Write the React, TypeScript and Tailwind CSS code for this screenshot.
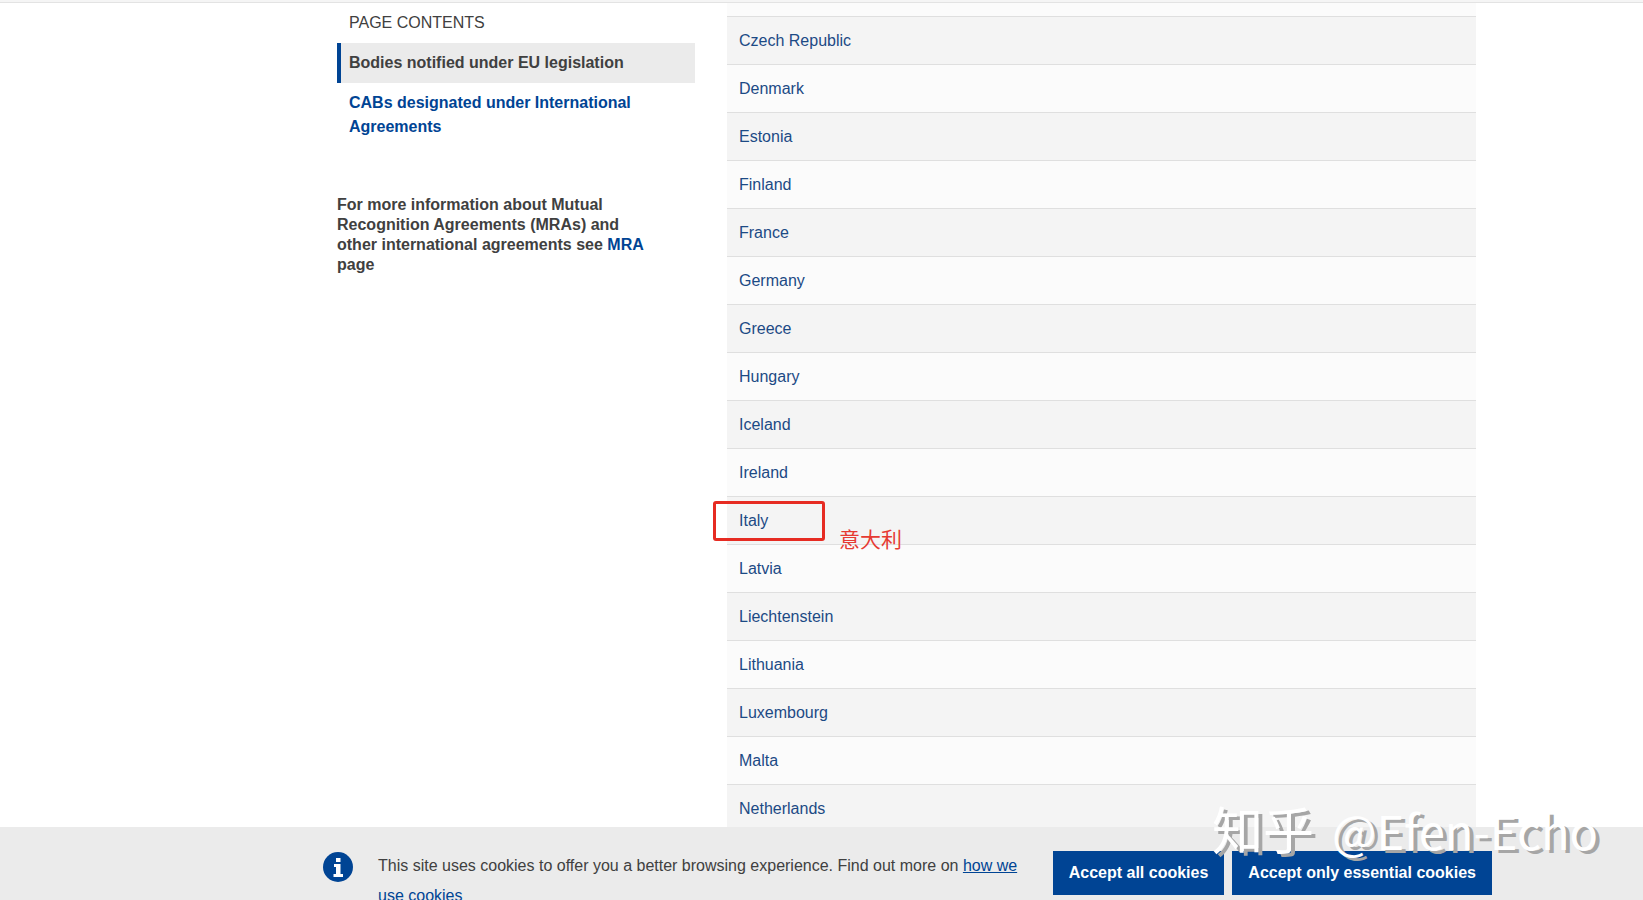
const countries = [
  "Czech Republic",
  "Denmark",
  "Estonia",
  "Finland",
  "France",
  "Germany",
  "Greece",
  "Hungary",
  "Iceland",
  "Ireland",
  "Italy",
  "Latvia",
  "Liechtenstein",
  "Lithuania",
  "Luxembourg",
  "Malta",
  "Netherlands",
];

function Sidebar() {
  return (
    <aside className="w-[358px] shrink-0 pt-2">
      <nav aria-labelledby="page-contents">
        <h2 id="page-contents" className="pb-2 pl-3 leading-6">
          PAGE CONTENTS
        </h2>
        <ul className="font-bold leading-6">
          <li>
            <a
              href="#bodies"
              aria-current="true"
              className="block border-l-4 border-[#004494] bg-[#ebebeb] py-2 pl-2"
            >
              Bodies notified under EU legislation
            </a>
          </li>
          <li>
            <a href="#cabs" className="block py-2 pl-3 pr-12 text-[#004494]">
              CABs designated under International Agreements
            </a>
          </li>
        </ul>
      </nav>
      <p className="mt-12 pr-12 font-bold leading-5">
        For more information about Mutual Recognition Agreements (MRAs) and
        other international agreements see{" "}
        <a href="#mra" className="text-[#004494]">
          MRA
        </a>{" "}
        page
      </p>
    </aside>
  );
}

function CountryTable() {
  return (
    <table className="w-full flex-1 border-separate border-spacing-0">
      <thead>
        <tr className="bg-[#fbfbfb]">
          <th className="h-[13px] p-0" />
        </tr>
      </thead>
      <tbody>
        {countries.map((name) => (
          <tr key={name} className="odd:bg-[#f4f4f4] even:bg-[#fbfbfb]">
            <td className="h-12 border-t border-[#dfdfdf] px-3 py-0">
              <span className="relative">
                <a href={`#${name}`} className="text-[#1c4a85]">
                  {name}
                </a>
                {name === "Italy" && <Highlight label="意大利" />}
              </span>
            </td>
          </tr>
        ))}
      </tbody>
    </table>
  );
}

function Highlight({ label }: { label: string }) {
  return (
    <>
      <span className="pointer-events-none absolute -left-[26px] -top-[11px] h-10 w-28 rounded-[3px] border-3 border-[#e62b22]" />
      <span className="pointer-events-none absolute left-[100px] top-4 whitespace-nowrap text-[21px] leading-6 text-[#e63a32]">
        {label}
      </span>
    </>
  );
}

function InfoIcon() {
  return (
    <svg viewBox="0 0 30 30" className="mt-[25px] size-[30px] shrink-0" aria-hidden="true">
      <circle cx="15" cy="15" r="15" fill="#004494" />
      <path
        d="M13 6h4.500v4H13zM11 12h6.500v10h2.500v3h-9.500v-3h2.500v-7h-2z"
        fill="#fff"
      />
    </svg>
  );
}

function Watermark() {
  return (
    <div className="pointer-events-none absolute -top-[34px] right-[45px] flex items-baseline gap-[18px] whitespace-nowrap font-['Noto_Sans_CJK_SC',sans-serif] leading-[70px] text-white [text-shadow:4px_3px_0_#a6a6a6]">
      <span className="text-[51px]">知乎</span>
      <span className="text-[47px]">@Efen-Echo</span>
    </div>
  );
}

function CookieBar() {
  return (
    <section
      aria-label="Cookies"
      className="relative h-[73px] shrink-0 bg-[#ebebeb] pl-[323px] pr-[151px]"
    >
      <div className="flex h-full items-start overflow-hidden">
        <InfoIcon />
        <p className="ml-[25px] mr-8 flex-1 pt-6 leading-[30px]">
          This site uses cookies to offer you a better browsing experience. Find
          out more on{" "}
          <a href="#cookies" className="text-[#004494] underline">
            how we use cookies
          </a>
        </p>
        <div className="mt-6 flex gap-2 font-bold text-white">
          <button type="button" className="h-11 whitespace-nowrap bg-[#004494] px-4">
            Accept all cookies
          </button>
          <button type="button" className="h-11 whitespace-nowrap bg-[#004494] px-4">
            Accept only essential cookies
          </button>
        </div>
      </div>
      <Watermark />
    </section>
  );
}

export default function App() {
  return (
    <div className="flex h-screen flex-col overflow-hidden bg-white font-['Liberation_Sans','Noto_Sans_CJK_SC',sans-serif] text-base text-[#404040]">
      <header className="h-[3px] shrink-0 border-b border-[#e3e3e3] bg-[#f5f5f5]" />
      <main className="flex min-h-0 flex-1 items-start gap-8 overflow-hidden pl-[337px] pr-[167px]">
        <Sidebar />
        <CountryTable />
      </main>
      <CookieBar />
    </div>
  );
}
